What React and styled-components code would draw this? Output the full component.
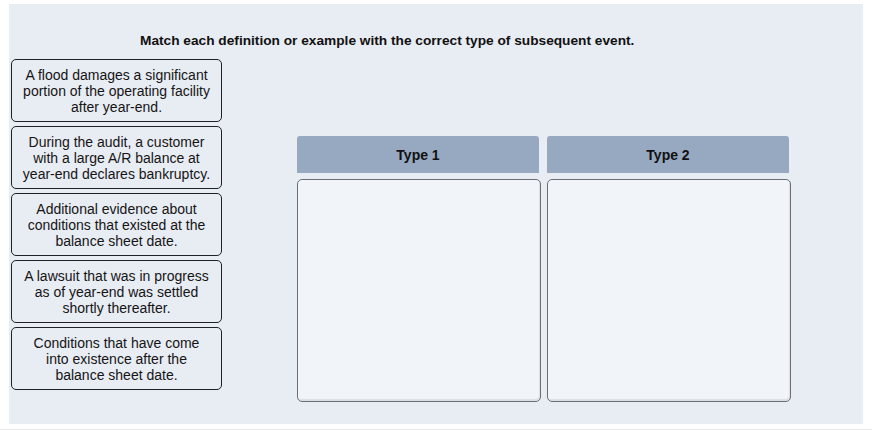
import React from 'react'
import styled, { createGlobalStyle } from 'styled-components'

const GlobalStyle = createGlobalStyle`
body {
  margin: 0;
  background: #ffffff;
  font-family: "Liberation Sans", Arial, Helvetica, sans-serif;
}
`

const Page = styled.div`
padding: 4px 9px 5px 9px;
border-bottom: 1px solid #e9ebee;
`

const Panel = styled.div`
box-sizing: border-box;
height: 420px;
background-color: #e8ecf3;
padding: 29px 2px 0 2px;
`

const Title = styled.div`
margin-left: 129px;
font-size: 13.7px;
line-height: 16px;
font-weight: bold;
color: #111;
`

const Row = styled.div`
display: flex;
align-items: flex-start;
margin-top: 10px;
`

const CardList = styled.div`
display: flex;
flex-direction: column;
gap: 4px;
width: 211px;
`

const Card = styled.div`
box-sizing: border-box;
height: 63px;
padding: 7px 4px 6px;
border: 1px solid #1f2124;
border-radius: 5px;
background-color: #e8ecf3;
font-size: 14px;
line-height: 16px;
text-align: center;
white-space: nowrap;
color: #151515;
`

const Targets = styled.div`
display: grid;
grid-template-columns: 244px 244px;
column-gap: 6px;
margin-left: 75px;
margin-top: 77px;
`

const Column = styled.div`
display: flex;
flex-direction: column;
gap: 6px;
`

const Header = styled.div`
height: 37px;
margin-right: 2px;
display: flex;
align-items: center;
justify-content: center;
background-color: #97a9c1;
border-radius: 3px 3px 0 0;
font-size: 14px;
font-weight: bold;
color: #111;
`

const DropBox = styled.div`
box-sizing: border-box;
height: 223px;
background-color: #f1f5f9;
border: 1px solid #6c7075;
border-radius: 5px;
box-shadow: inset -1px -2px 1px rgba(0, 0, 0, 0.09);
`

const items = [
  ['A flood damages a significant', 'portion of the operating facility', 'after year-end.'],
  ['During the audit, a customer', 'with a large A/R balance at', 'year-end declares bankruptcy.'],
  ['Additional evidence about', 'conditions that existed at the', 'balance sheet date.'],
  ['A lawsuit that was in progress', 'as of year-end was settled', 'shortly thereafter.'],
  ['Conditions that have come', 'into existence after the', 'balance sheet date.'],
]

class App extends React.Component {
  render() {
    return (
      <Page>
        <GlobalStyle />
        <Panel>
          <Title>Match each definition or example with the correct type of subsequent event.</Title>
          <Row>
            <CardList>
              {items.map((lines, i) => (
                <Card key={i}>
                  {lines.map((l, j) => (
                    <div key={j}>{l}</div>
                  ))}
                </Card>
              ))}
            </CardList>
            <Targets>
              <Column>
                <Header>Type 1</Header>
                <DropBox />
              </Column>
              <Column>
                <Header>Type 2</Header>
                <DropBox />
              </Column>
            </Targets>
          </Row>
        </Panel>
      </Page>
    )
  }
}

export default App
